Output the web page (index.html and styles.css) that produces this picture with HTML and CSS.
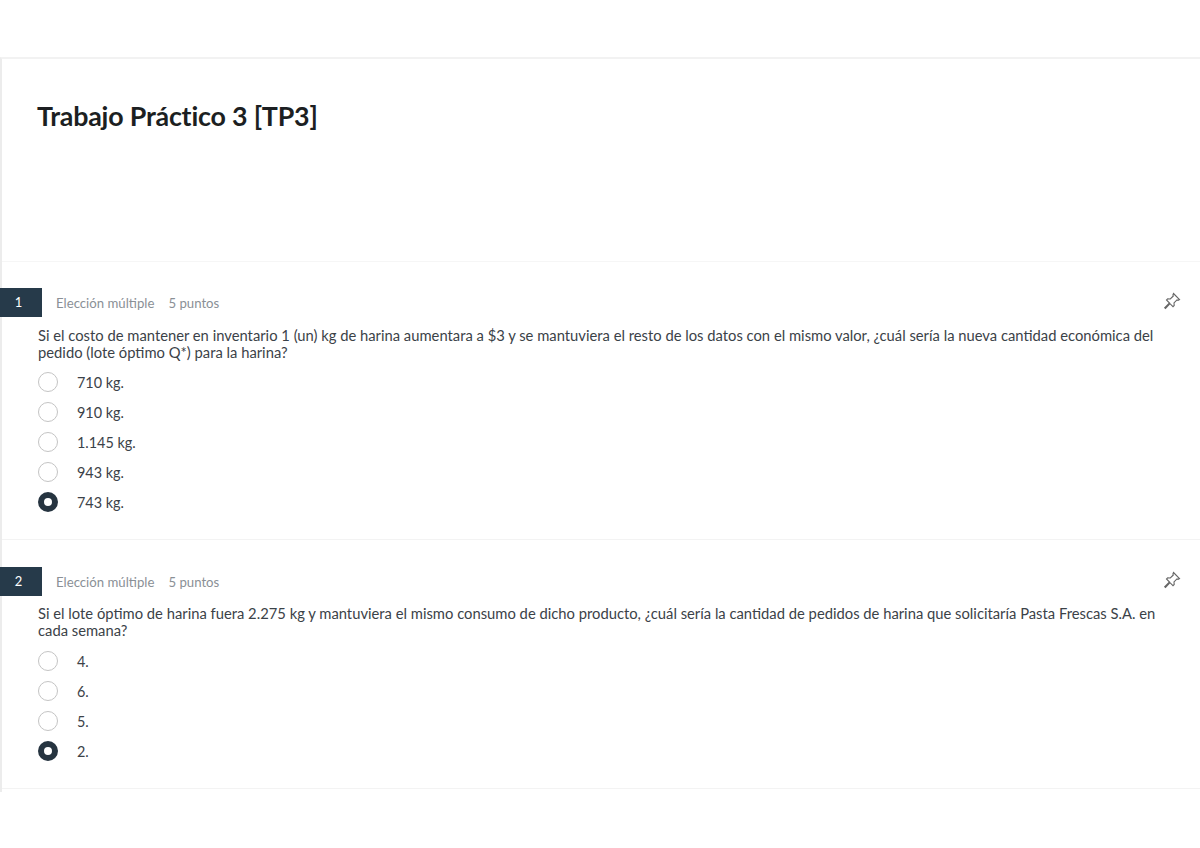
FILE: index.html
```html
<!DOCTYPE html>
<html lang="en">
<head>
    <meta charset="UTF-8">
    <title>Trabajo Práctico 3 [TP3]</title>
    <link rel="stylesheet" href="styles.css">
</head>
<body>

    <div class="page">
        <div class="header">
            <h1>Trabajo Práctico 3 [TP3]</h1>
        </div>

        <div class="question q1">
            <div class="meta">
                <div class="number">1</div>
                <span class="meta-text">Elección múltiple</span>
                <span class="meta-text">5 puntos</span>
                <svg class="pin" viewBox="0 0 18 18"><path d="M10.5 1.5l6 6-1.5.8-1-.4-3 3 .2 2.6-1.2 1.2-3-3-4.5 4.8-.8-.8L6.5 11l-3-3 1.2-1.2 2.6.2 3-3-.4-1z"/></svg>
            </div>
            <p class="text">Si el costo de mantener en inventario 1 (un) kg de harina aumentara a $3 y se mantuviera el resto de los datos con el mismo valor, ¿cuál sería la nueva cantidad económica del pedido (lote óptimo Q*) para la harina?</p>
            <div class="option"><span class="radio"></span>710 kg.</div>
            <div class="option"><span class="radio"></span>910 kg.</div>
            <div class="option"><span class="radio"></span>1.145 kg.</div>
            <div class="option"><span class="radio"></span>943 kg.</div>
            <div class="option"><span class="radio checked"></span>743 kg.</div>
        </div>

        <div class="question q2">
            <div class="meta">
                <div class="number">2</div>
                <span class="meta-text">Elección múltiple</span>
                <span class="meta-text">5 puntos</span>
                <svg class="pin" viewBox="0 0 18 18"><path d="M10.5 1.5l6 6-1.5.8-1-.4-3 3 .2 2.6-1.2 1.2-3-3-4.5 4.8-.8-.8L6.5 11l-3-3 1.2-1.2 2.6.2 3-3-.4-1z"/></svg>
            </div>
            <p class="text">Si el lote óptimo de harina fuera 2.275 kg y mantuviera el mismo consumo de dicho producto, ¿cuál sería la cantidad de pedidos de harina que solicitaría Pasta Frescas S.A. en cada semana?</p>
            <div class="option"><span class="radio"></span>4.</div>
            <div class="option"><span class="radio"></span>6.</div>
            <div class="option"><span class="radio"></span>5.</div>
            <div class="option"><span class="radio checked"></span>2.</div>
        </div>
    </div>

</body>
</html>
```

FILE: styles.css
```css
body {
    margin: 0;
    background-color: #fff;
    font-family: Lato, sans-serif;
    color: #3b4248;
}
.page {
    margin-top: 57px;
    height: 735px;
    border-top: 2px solid #f2f2f2;
    border-left: 2px solid #ececec;
    box-sizing: border-box;
}
.header {
    height: 203px;
    padding: 41px 0 0 35px;
    box-sizing: border-box;
    border-bottom: 1px solid #f6f6f6;
}
h1 {
    margin: 0;
    font-size: 26.8px;
    line-height: 32px;
    font-weight: 700;
    letter-spacing: -0.2px;
    color: #1c1f22;
}
.question {
    padding-top: 26px;
    border-bottom: 1px solid #f3f3f3;
    box-sizing: border-box;
}
.q1 {
    height: 278px;
}
.q2 {
    height: 249px;
    padding-top: 27px;
}
.meta {
    display: flex;
    align-items: center;
    height: 29px;
    margin-left: -2px;
}
.number {
    width: 42px;
    height: 29px;
    line-height: 29px;
    background-color: #263a4a;
    color: #fff;
    font-size: 13px;
    text-align: center;
    margin-right: 14px;
    padding-right: 5px;
    box-sizing: border-box;
}
.meta-text {
    font-size: 13.2px;
    color: #8a9096;
    margin-right: 14px;
}
.pin {
    width: 18px;
    height: 18px;
    margin-left: auto;
    margin-right: 19px;
    margin-top: -3px;
    fill: none;
    stroke: #666;
    stroke-width: 1.1;
}
.text {
    margin: 10px 40px 0 36px;
    font-size: 14.78px;
    line-height: 17px;
}
.q2 .text {
    margin-top: 9px;
}
.option {
    display: flex;
    align-items: center;
    height: 30px;
    margin-left: 36px;
    font-size: 14.4px;
}
.text + .option {
    margin-top: 6px;
}
.q2 .text + .option {
    margin-top: 7px;
}
.radio {
    width: 20px;
    height: 20px;
    border: 1.5px solid #c4c4c4;
    border-radius: 50%;
    box-sizing: border-box;
    margin-right: 19px;
}
.radio.checked {
    border: 6px solid #263440;
}
```
